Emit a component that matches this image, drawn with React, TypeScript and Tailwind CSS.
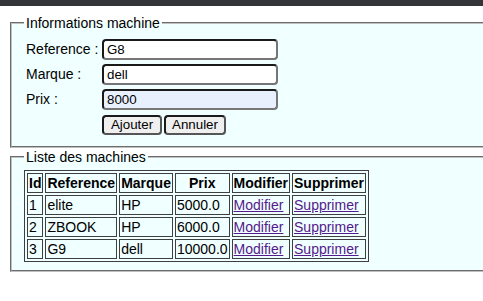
import React from "react";

const machines = [
  { id: 1, reference: "elite", marque: "HP", prix: "5000.0" },
  { id: 2, reference: "ZBOOK", marque: "HP", prix: "6000.0" },
  { id: 3, reference: "G9", marque: "dell", prix: "10000.0" },
];

const cell = "border border-[#3f3f3f] px-[1px] py-[1px] leading-[16px]";
const field =
  "h-[21px] w-[176px] rounded-[4px] border-2 border-t-[#1a1a1a] border-l-[#1a1a1a] border-r-[#767676] border-b-[#767676] px-[3px] text-[13.33px] leading-[15px] outline-none";
const btn =
  "h-[20px] rounded-[4px] border-2 border-t-[#1a1a1a] border-l-[#1a1a1a] border-r-[#555] border-b-[#555] bg-[#efefef] px-[5px] text-[13.33px] leading-[14px]";

export default function App() {
  return (
    <div className="w-[483px] h-[301px] overflow-hidden bg-white text-[14px] text-black font-['Liberation_Sans',Arial,sans-serif]">
      <div className="h-[6px] bg-[#333438]" />

      {/* Informations machine */}
      <fieldset className="ml-[10px] mt-[9px] w-[500px] border-2 border-[#c0c0c0] [border-style:groove] bg-[#f0ffff] pl-[12px] pb-[11px]">
        <legend className="px-[2px] leading-[16px]">Informations machine</legend>
        <div className="flex flex-col gap-[4px] pt-[8px] pl-[2px]">
          <div className="flex items-center h-[21px]">
            <span className="w-[76px]">Reference :</span>
            <input className={field + " bg-white"} defaultValue="G8" />
          </div>
          <div className="flex items-center h-[21px]">
            <span className="w-[76px]">Marque :</span>
            <input className={field + " bg-white"} defaultValue="dell" />
          </div>
          <div className="flex items-center h-[21px]">
            <span className="w-[76px]">Prix :</span>
            <input className={field + " bg-[#e8f0fe]"} defaultValue="8000" />
          </div>
          <div className="flex items-center h-[21px] pl-[76px] gap-[2px]">
            <button className={btn + " w-[60px]"}>Ajouter</button>
            <button className={btn + " w-[62px]"}>Annuler</button>
          </div>
        </div>
      </fieldset>

      {/* Liste des machines */}
      <fieldset className="ml-[10px] mt-[1px] w-[500px] border-2 border-[#c0c0c0] [border-style:groove] bg-[#f0ffff] pl-[12px] pt-[5px] pb-[8px]">
        <legend className="px-[2px] leading-[16px]">Liste des machines</legend>
        <table className="border border-[#3f3f3f] border-separate border-spacing-[2px] text-left">
          <thead>
            <tr>
              <th className={cell + " text-center"}>Id</th>
              <th className={cell + " text-center"}>Reference</th>
              <th className={cell + " text-center"}>Marque</th>
              <th className={cell + " text-center"}>Prix</th>
              <th className={cell + " text-center"}>Modifier</th>
              <th className={cell + " text-center"}>Supprimer</th>
            </tr>
          </thead>
          <tbody>
            {machines.map((m) => (
              <tr key={m.id}>
                <td className={cell}>{m.id}</td>
                <td className={cell}>{m.reference}</td>
                <td className={cell}>{m.marque}</td>
                <td className={cell}>{m.prix}</td>
                <td className={cell}>
                  <a href="#" className="text-[#551a8b] underline">Modifier</a>
                </td>
                <td className={cell}>
                  <a href="#" className="text-[#551a8b] underline">Supprimer</a>
                </td>
              </tr>
            ))}
          </tbody>
        </table>
      </fieldset>
    </div>
  );
}
